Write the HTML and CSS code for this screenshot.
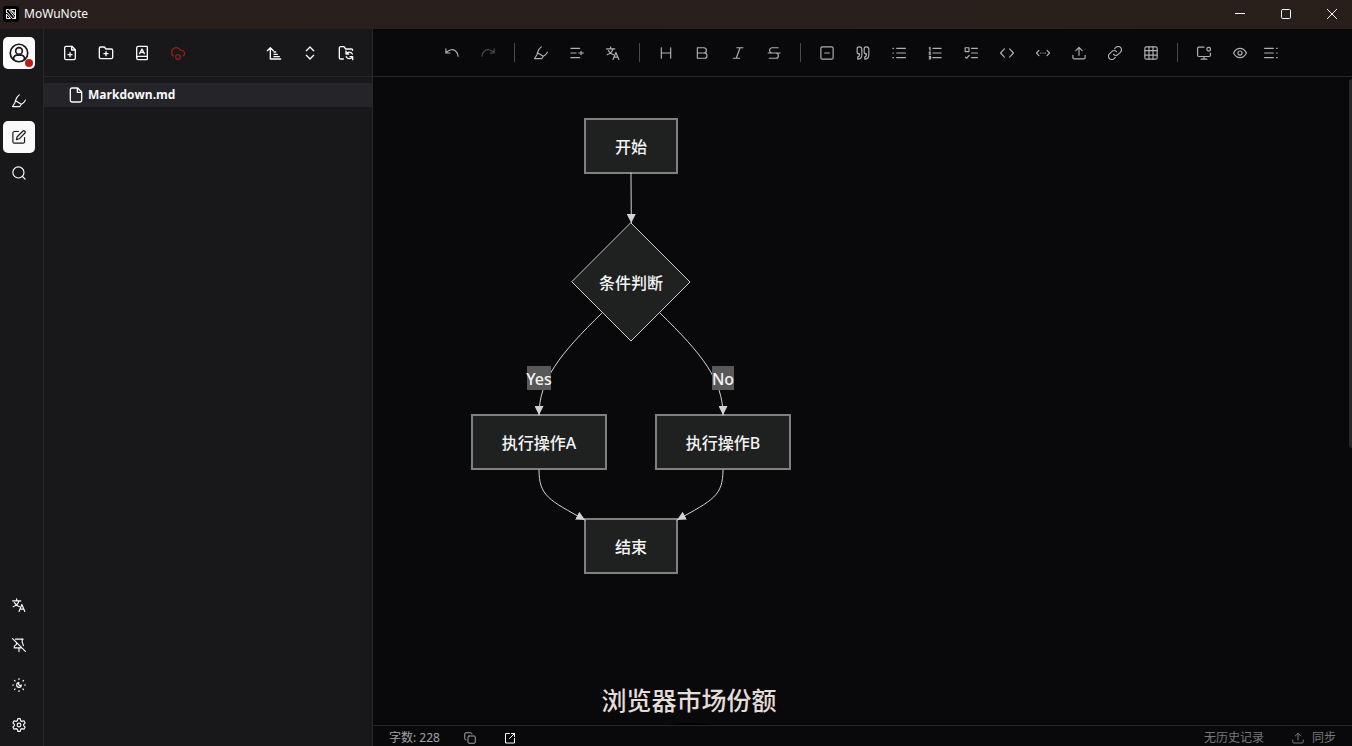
FILE: index.html
```html
<!DOCTYPE html>
<html lang="zh-CN">
<head>
  <meta charset="UTF-8">
  <meta name="viewport" content="width=device-width, initial-scale=1">
  <title>MoWuNote</title>
  <link rel="stylesheet" href="styles.css">
</head>
<body>
  <!-- shared icons -->
  <svg class="sprite" aria-hidden="true">
    <symbol id="i-highlight" viewBox="0 0 24 24"><path d="M12.500 1.500C9 4 7 7.500 6 11l-1 4-4 6.500h12.500l2.500-4c3-1 5.500-3.500 7-7M6 11.500l10 6"/></symbol>
    <symbol id="i-translate" viewBox="0 0 24 24"><path d="M1 5h14M8 1.500V5M12 5c-1 4-5 8-10 10M4 8c2 3 5 5.500 9 7M12 23l5-12 5 12M14 19h6.500"/></symbol>
    <symbol id="i-upload" viewBox="0 0 24 24"><path d="M1.500 16v3.500a2.500 2.500 0 0 0 2.500 2.500h16a2.500 2.500 0 0 0 2.500-2.500V16M12 16V2.500M6.500 8 12 2.500 17.500 8"/></symbol>
  </svg>

  <header class="titlebar">
    <svg class="logo" viewBox="0 0 16 16">
      <rect class="logo-bg" width="16" height="16" rx="3"/>
      <path d="M3.500 6.500v-3h2l7 9M3.500 8.500v4h3.500zM3.500 5.500l6 7M8 3.500h4.500v4zM12.500 7v5.500h-2M7 3.500l5.500 6"/>
    </svg>
    <span class="app-name">MoWuNote</span>
    <div class="window-controls">
      <button aria-label="最小化"><svg viewBox="0 0 10 10"><path d="M0 4.500h10"/></svg></button>
      <button aria-label="最大化"><svg viewBox="0 0 10 10"><rect x=".5" y=".5" width="9" height="9" rx="1"/></svg></button>
      <button aria-label="关闭"><svg viewBox="0 0 10 10"><path d="m.2.2 9.600 9.600M9.800.2.2 9.800"/></svg></button>
    </div>
  </header>

  <div class="app">
    <nav class="rail">
      <div class="rail-group rail-top">
        <button class="rail-btn active avatar" aria-label="账号">
          <svg viewBox="0 0 24 24"><circle cx="12" cy="12" r="10.500"/><circle cx="12" cy="9.500" r="4"/><path d="M5.500 20v-1.500a4 4 0 0 1 4-4h5a4 4 0 0 1 4 4V20"/></svg>
          <span class="dot"></span>
        </button>
        <button class="rail-btn" aria-label="高亮"><svg viewBox="0 0 24 24"><use href="#i-highlight"/></svg></button>
        <button class="rail-btn active" aria-label="编辑"><svg viewBox="0 0 24 24"><path d="M11 2.500H4a2.500 2.500 0 0 0-2.500 2.500v15A2.500 2.500 0 0 0 4 22.500h15a2.500 2.500 0 0 0 2.500-2.500v-7"/><path d="M18.400 2.100a2.400 2.400 0 0 1 3.500 3.500L12.400 15.100 7.500 16.500l1.400-4.900z"/></svg></button>
        <button class="rail-btn" aria-label="搜索"><svg viewBox="0 0 24 24"><circle cx="11" cy="11" r="9.500"/><path d="m22.500 22.500-4.500-4.500"/></svg></button>
      </div>
      <div class="rail-group rail-bottom">
        <button class="rail-btn" aria-label="语言"><svg viewBox="0 0 24 24"><use href="#i-translate"/></svg></button>
        <button class="rail-btn" aria-label="取消固定"><svg viewBox="0 0 24 24"><path d="M12 17v6M1 1l22 22M6 2h13M17.500 2v5l2 6M8 8.500 7.500 11 4 14V17h13"/></svg></button>
        <button class="rail-btn" aria-label="主题"><svg viewBox="0 0 24 24"><path d="M12 8a2.800 2.800 0 1 0 4 4 4 4 0 1 1-4-4M12 1v1.500M12 21.500V23M1 12h1.500M21.500 12H23M4.200 4.200l1 1M18.800 18.800l1 1M4.200 19.800l1-1M18.800 5.200l1-1"/></svg></button>
        <button class="rail-btn" aria-label="设置"><svg viewBox="0 0 24 24"><path d="M10 1h4l.8 3.500 2.200 1.300 3.500-1 2 3.700L20 11v2l2.500 2.500-2 3.700-3.500-1-2.200 1.300L14 23h-4l-.8-3.500L7 18.200l-3.500 1-2-3.700L4 13v-2L1.500 8.500l2-3.700 3.500 1 2.200-1.300z"/><circle cx="12" cy="12" r="3.200"/></svg></button>
      </div>
    </nav>

    <aside class="files">
      <div class="files-toolbar">
        <button aria-label="新建文件"><svg viewBox="0 0 24 24"><path d="M15 2H6a2 2 0 0 0-2 2v16a2 2 0 0 0 2 2h12a2 2 0 0 0 2-2V7zM14.500 2v5.500H20M9 14.500h6M12 11.500v6"/></svg></button>
        <button aria-label="新建文件夹"><svg viewBox="0 0 24 24"><path d="M20 20.500a2 2 0 0 0 2-2V8a2 2 0 0 0-2-2h-8L9.500 3H4a2 2 0 0 0-2 2v13.500a2 2 0 0 0 2 2zM12 10v6M9 13h6"/></svg></button>
        <button aria-label="词典"><svg viewBox="0 0 24 24"><path d="M4 19.500v-15A2.500 2.500 0 0 1 6.500 2H19a1 1 0 0 1 1 1v18a1 1 0 0 1-1 1H6.500a2.500 2.500 0 0 1 0-5H20M8.500 13 12 6l3.500 7M9.500 11h5"/></svg></button>
        <button class="danger" aria-label="云同步"><svg viewBox="0 0 24 24"><path d="M5 16.500A7 7 0 1 1 15.700 8h1.800a4.500 4.500 0 0 1 2.500 8.200"/><circle cx="12" cy="18" r="3.500"/></svg></button>
        <span class="spacer"></span>
        <button aria-label="排序"><svg viewBox="0 0 24 24"><path d="M2 8.500 6.500 4 11 8.500M6.500 4v17H22M12 10.500h2.500M12 14h5M12 17.500h8"/></svg></button>
        <button aria-label="展开折叠"><svg viewBox="0 0 24 24"><path d="m6.500 15.500 5.500 5.500 5.500-5.500M6.500 8.500 12 3l5.500 5.500"/></svg></button>
        <button aria-label="刷新文件夹"><svg viewBox="0 0 24 24"><path d="M8 21H4a2 2 0 0 1-2-2V4.500a2 2 0 0 1 2-2h5L11.500 6H20a2 2 0 0 1 2 2M12 9v4.500h4M12.500 13.500a5 5 0 0 1 9 0M22 22v-4.500h-4M21.500 17.500a5 5 0 0 1-9 0"/></svg></button>
      </div>
      <ul class="file-list">
        <li><a class="file selected" href="#"><svg viewBox="0 0 24 24"><path d="M14.500 1.500H6a2.500 2.500 0 0 0-2.500 2.500v16A2.500 2.500 0 0 0 6 22.500h12a2.500 2.500 0 0 0 2.500-2.500V7.500zM14 1.500V8h6.500"/></svg>Markdown.md</a></li>
      </ul>
    </aside>

    <main class="editor">
      <div class="toolbar">
        <button aria-label="撤销"><svg viewBox="0 0 24 24"><path d="M1.500 5v7h7M2 11.500C7 5.500 14 5 18 8.500c2.500 2 4 5 4.500 9"/></svg></button>
        <button disabled aria-label="重做"><svg viewBox="0 0 24 24"><path d="M22.500 5v7h-7M22 11.500C17 5.500 10 5 6 8.500c-2.500 2-4 5-4.500 9"/></svg></button>
        <span class="divider"></span>
        <button aria-label="标记"><svg viewBox="0 0 24 24"><use href="#i-highlight"/></svg></button>
        <button aria-label="续写"><svg viewBox="0 0 24 24"><path d="M1.500 4h15M1.500 12h9M1.500 20h15M15 12h8M19 9v6"/></svg></button>
        <button aria-label="翻译"><svg viewBox="0 0 24 24"><use href="#i-translate"/></svg></button>
        <span class="divider"></span>
        <button aria-label="标题"><svg viewBox="0 0 24 24"><path d="M4 3v18M20 3v18M4 12h16"/></svg></button>
        <button aria-label="粗体"><svg viewBox="0 0 24 24"><path d="M4 3h11a4.500 4.500 0 0 1 0 9H4zM4 12h12a4.500 4.500 0 0 1 0 9H4z"/></svg></button>
        <button aria-label="斜体"><svg viewBox="0 0 24 24"><path d="M10 3h10.500M4 21h10.500M15.500 3l-6.500 18"/></svg></button>
        <button aria-label="删除线"><svg viewBox="0 0 24 24"><path d="M19 3H9a4.500 4.500 0 0 0-3.500 7.500C6.500 11.700 8 12 9 12h6a4.500 4.500 0 0 1 0 9H4M2 12h20.500"/></svg></button>
        <span class="divider"></span>
        <button aria-label="分隔线"><svg viewBox="0 0 24 24"><rect x="1.500" y="1.500" width="21" height="21" rx="2.500"/><path d="M8 12h8"/></svg></button>
        <button aria-label="引用"><svg viewBox="0 0 24 24"><path d="M2 4.500C2 2 4 1.500 6 1.500s4 1 4 4V15c0 5-3 7.500-7 7.500v-4c3 0 3-2 3-5-3 0-4-1-4-3zM14 4.500c0-2.500 2-3 4-3s4 1 4 4V15c0 5-3 7.500-7 7.500v-4c3 0 3-2 3-5-3 0-4-1-4-3z"/></svg></button>
        <button aria-label="无序列表"><svg viewBox="0 0 24 24"><path d="M8 4h15M8 12h15M8 20h15M1.500 4h1M1.500 12h1M1.500 20h1"/></svg></button>
        <button aria-label="有序列表"><svg viewBox="0 0 24 24"><path d="M8.500 4h14M8.500 12h14M8.500 20h14M2 3.500l1.500-1v5M2 10.500h2L2 14h2.500M2 17.500h2.500V22H2M2.500 19.500h2"/></svg></button>
        <button aria-label="任务列表"><svg viewBox="0 0 24 24"><path d="M13 4h10M13 12h10M13 20h10M2 3h6.500v6.500H2zM2.500 19l2 2L9 16"/></svg></button>
        <button aria-label="代码块"><svg viewBox="0 0 24 24"><path d="m7.500 5-6.500 7 6.500 7M16.500 5l6.500 7-6.500 7"/></svg></button>
        <button aria-label="行内代码"><svg viewBox="0 0 24 24"><path d="M5 7.500.8 12 5 16.500M19 7.500l4.200 4.500-4.200 4.500M8 12h.5M12 12h.1M15.500 12h.5"/></svg></button>
        <button aria-label="上传"><svg viewBox="0 0 24 24"><use href="#i-upload"/></svg></button>
        <button aria-label="链接"><svg viewBox="0 0 24 24"><path d="M9.500 14.500a5.500 5.500 0 0 0 8 0l4-4a5.500 5.500 0 0 0-8-8L11.500 4.500M14.500 9.500a5.500 5.500 0 0 0-8 0l-4 4a5.500 5.500 0 0 0 8 8l2-2"/></svg></button>
        <button aria-label="表格"><svg viewBox="0 0 24 24"><rect x="1.500" y="1.500" width="21" height="21" rx="2.500"/><path d="M1.500 8h21M1.500 15.500h21M8.500 1.500v21M15.500 1.500v21"/></svg></button>
        <span class="divider"></span>
        <button aria-label="预览设置"><svg viewBox="0 0 24 24"><path d="M12 2H3a2 2 0 0 0-2 2v12a2 2 0 0 0 2 2h18a2 2 0 0 0 2-2v-4M7 22.500h10M12 18v4.500"/><circle cx="20" cy="5.500" r="3.200"/></svg></button>
        <button aria-label="预览"><svg viewBox="0 0 24 24"><path d="M1 12c3-6 7-8 11-8s8 2 11 8c-3 6-7 8-11 8s-8-2-11-8z"/><circle cx="12" cy="12" r="3.500"/></svg></button>
        <button class="outline" aria-label="大纲"><svg viewBox="0 0 24 24"><path d="M1 4h15M1 12h15M1 20h15M21.500 4h1M21.500 12h1M21.500 20h1"/></svg></button>
      </div>

      <section class="preview">
        <div class="content">
          <svg class="flowchart" width="336" height="472" viewBox="463 110 336 472">
            <defs>
              <marker id="arrow" viewBox="0 0 10 10" refX="10" refY="5" markerWidth="9" markerHeight="9" markerUnits="userSpaceOnUse" orient="auto"><path d="M0 0l10 5-10 5z"/></marker>
            </defs>
            <rect class="node" x="585" y="119" width="92" height="54"/>
            <path class="node" d="M631 223l59 59-59 59-59-59z"/>
            <rect class="node" x="472" y="415" width="134" height="54"/>
            <rect class="node" x="656" y="415" width="134" height="54"/>
            <rect class="node" x="585" y="519" width="92" height="54"/>

            <path class="edge" d="M631 173l.3 50"/>
            <path class="edge" d="M602 313C560 354 539 380 539 415"/>
            <path class="edge" d="M660 313C702 354 723 380 723 415"/>
            <path class="edge" d="M539 470C539 496 549 500 585 520"/>
            <path class="edge" d="M723 470C723 496 713 500 677 520"/>

            <rect class="edge-label" x="527" y="366" width="24" height="24"/>
            <rect class="edge-label" x="712" y="366" width="22" height="24"/>
            <text x="631" y="153">开始</text>
            <text x="631" y="289">条件判断</text>
            <text x="539" y="385">Yes</text>
            <text x="723" y="385">No</text>
            <text x="539" y="449">执行操作A</text>
            <text x="723" y="449">执行操作B</text>
            <text x="631" y="553">结束</text>
          </svg>
          <figure class="chart">
            <figcaption>浏览器市场份额</figcaption>
            <svg width="300" height="300" viewBox="0 0 300 300"><circle cx="150" cy="150" r="150"/></svg>
          </figure>
        </div>
        <span class="scroll-thumb"></span>
      </section>

      <footer class="status">
        <span class="count">字数: 228</span>
        <button aria-label="复制"><svg viewBox="0 0 24 24"><rect x="8" y="8" width="14.500" height="14.500" rx="2"/><path d="M4 16a2.500 2.500 0 0 1-2.500-2.500V4A2.500 2.500 0 0 1 4 1.500h9.500A2.500 2.500 0 0 1 16 4"/></svg></button>
        <button class="bright" aria-label="在新窗口打开"><svg viewBox="0 0 24 24"><path d="M11 3H3v19h18v-9M15 3h6v6M21 3 11 13"/></svg></button>
        <span class="spacer"></span>
        <span class="muted">无历史记录</span>
        <button class="muted sync"><svg viewBox="0 0 24 24"><use href="#i-upload"/></svg>同步</button>
      </footer>
    </main>
  </div>
</body>
</html>
```
FILE: styles.css
```css
* {
  box-sizing: border-box;
}

body {
  margin: 0;
  height: 100vh;
  display: flex;
  flex-direction: column;
  overflow: hidden;
  background: #09090b;
  color: #fafafa;
  font-family: "Noto Sans", "Noto Sans CJK SC", sans-serif;
  font-size: 12px;
}

button {
  display: flex;
  align-items: center;
  justify-content: center;
  padding: 0;
  border: none;
  background: none;
  color: inherit;
  font: inherit;
  cursor: pointer;
}

svg {
  flex: none;
  fill: none;
  stroke: currentColor;
  stroke-width: 2;
  stroke-linecap: round;
  stroke-linejoin: round;
}

.sprite {
  position: absolute;
  width: 0;
  height: 0;
}

.spacer {
  flex: 1;
}

/* title bar */
.titlebar {
  display: flex;
  align-items: center;
  flex: none;
  height: 29px;
  padding: 0 5px 2px 3px;
  background: linear-gradient(90deg, #281e1d, #291f1a);
}

.logo {
  width: 16px;
  height: 16px;
  stroke-width: 1;
}

.logo-bg {
  fill: #000;
  stroke: none;
}

.app-name {
  margin-left: 5px;
}

.window-controls {
  display: flex;
  gap: 16px;
  margin-left: auto;
}

.window-controls button {
  width: 30px;
  height: 27px;
}

.window-controls svg {
  width: 10px;
  height: 10px;
  stroke-width: 1;
}

.app {
  flex: 1;
  display: flex;
  min-height: 0;
}

/* left rail */
.rail {
  flex: none;
  display: flex;
  flex-direction: column;
  justify-content: space-between;
  width: 44px;
  padding: 8px 0 5px 3px;
  background: #18181b;
  border-right: 1px solid #27272a;
}

.rail-group {
  display: flex;
  flex-direction: column;
}

.rail-top {
  gap: 4px;
}

.rail-bottom {
  gap: 8px;
}

.rail-btn {
  position: relative;
  width: 32px;
  height: 32px;
  border-radius: 5px;
}

.rail-btn svg {
  width: 14px;
  height: 14px;
}

.rail-btn.active {
  background: #fafafa;
  color: #18181b;
}

.avatar {
  margin-bottom: 12px;
}

.avatar svg {
  width: 20px;
  height: 20px;
}

.dot {
  position: absolute;
  right: 2px;
  bottom: 2px;
  width: 8px;
  height: 8px;
  border-radius: 50%;
  background: #b91c1c;
}

/* file panel */
.files {
  flex: none;
  width: 329px;
  background: #18181b;
  border-right: 1px solid #27272a;
}

.files-toolbar {
  display: flex;
  align-items: center;
  gap: 4px;
  height: 48px;
  padding: 0 10px;
  border-bottom: 1px solid #27272a;
}

.files-toolbar button {
  width: 32px;
  height: 32px;
}

.files-toolbar svg {
  width: 16px;
  height: 16px;
}

.files-toolbar .danger {
  color: #991b1b;
}

.file-list {
  margin: 6px 0 0;
  padding: 0;
  list-style: none;
}

.file {
  display: flex;
  align-items: center;
  gap: 4px;
  height: 24px;
  padding: 0 0 1px 24px;
  color: #fafafa;
  font-family: "Open Sans", "Noto Sans CJK SC", sans-serif;
  font-weight: 700;
  text-decoration: none;
}

.file.selected {
  background: #252429;
}

.file svg {
  width: 16px;
  height: 16px;
}

/* editor */
.editor {
  flex: 1;
  display: flex;
  flex-direction: column;
  min-width: 0;
}

.toolbar {
  flex: none;
  display: flex;
  align-items: center;
  justify-content: center;
  height: 48px;
  padding-left: 3px;
  border-bottom: 1px solid #27272a;
  color: #b0b0b3;
}

.toolbar button {
  width: 36px;
  height: 32px;
}

.toolbar svg {
  width: 14px;
  height: 14px;
}

.toolbar button:disabled {
  color: #4a4a4d;
}

.toolbar .outline {
  justify-content: flex-start;
  padding-left: 6px;
}

.divider {
  width: 1px;
  height: 19px;
  margin: 0 8px;
  background: #4a4a4d;
}

.preview {
  position: relative;
  flex: 1;
  min-height: 0;
  overflow: hidden;
}

.content {
  max-width: 632px;
  padding: 33px 10px 0;
}

.flowchart {
  display: block;
  margin-left: 80px;
}

.flowchart .node {
  fill: #1f2020;
  stroke: #ccc;
  stroke-width: 1;
}

.flowchart rect.node {
  stroke: #808080;
  stroke-width: 2;
  stroke-linejoin: miter;
}

.flowchart .edge {
  stroke: #d3d3d3;
  stroke-width: 1;
  marker-end: url(#arrow);
}

.flowchart marker path {
  fill: #d3d3d3;
  stroke: none;
}

.flowchart .edge-label {
  fill: #585858;
  stroke: none;
}

.flowchart text {
  fill: #f4f4f5;
  stroke: none;
  font-size: 16px;
  font-weight: 500;
  text-anchor: middle;
}

.chart {
  margin: 100px 0 0;
  text-align: center;
}

.chart figcaption {
  color: #e4dcd8;
  font-size: 25px;
  font-weight: 500;
  line-height: 36px;
}

.chart svg {
  display: block;
  margin: 5px auto 0;
  fill: #000;
  stroke: none;
}

.scroll-thumb {
  position: absolute;
  top: 2px;
  right: 0;
  width: 3px;
  height: 57%;
  border-radius: 3px 0 0 3px;
  background: #27272a;
}

/* status bar */
.status {
  flex: none;
  display: flex;
  align-items: center;
  height: 21px;
  padding: 3px 16px 0;
  border-top: 1px solid #27272a;
  color: #a1a1aa;
  line-height: 17px;
}

.status svg {
  width: 12px;
  height: 12px;
}

.status button {
  margin-left: 24px;
  width: 12px;
}

.status .bright {
  margin-left: 28px;
  color: #fafafa;
}

.status .muted {
  color: #77777b;
}

.status .sync {
  width: auto;
  gap: 8px;
  margin-left: 28px;
}
```
